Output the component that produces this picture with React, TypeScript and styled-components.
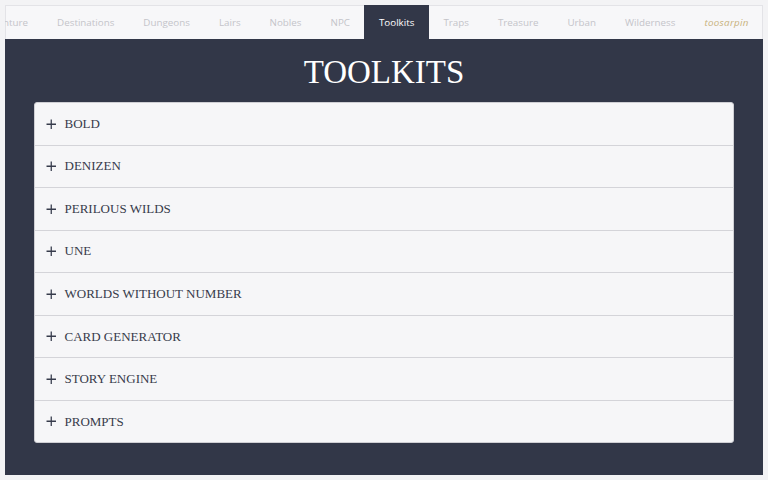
import React, { useLayoutEffect, useRef } from "react";
import styled, { createGlobalStyle, css } from "styled-components";

const Global = createGlobalStyle`
  html, body { margin: 0; padding: 0; background: #f3f3f5; }
  body { font-family: "Liberation Serif", serif; }
`;

const Page = styled.div`
  padding: 5px;
  display: flex;
  flex-direction: column;
`;

const Nav = styled.nav`
  height: 34px;
  background: #f7f7f9;
  box-shadow: inset 0 1px 0 #e3e3e7, inset 1px 0 0 #e3e3e7, inset -1px 0 0 #e3e3e7;
  overflow: hidden;
  display: flex;
`;

const Tab = styled.a<{ $active?: boolean; $brand?: boolean }>`
  flex-shrink: 0;
  display: flex;
  align-items: center;
  padding: 0 14.5px;
  font-family: "Open Sans", sans-serif;
  font-size: 9.8px;
  color: #c4c4c9;
  white-space: nowrap;
  text-decoration: none;
  ${(p) =>
    p.$active &&
    css`
      background: #323748;
      color: #ffffff;
    `}
  ${(p) =>
    p.$brand &&
    css`
      color: #c8b27c;
      font-style: italic;
      letter-spacing: 0.3px;
    `}
`;

const Panel = styled.main`
  background: #323748;
  padding: 13px 29px 32px;
  display: flex;
  flex-direction: column;
`;

const Title = styled.h1`
  margin: 0 0 10px;
  text-align: center;
  color: #ffffff;
  font-family: "Liberation Serif", serif;
  font-weight: normal;
  font-size: 33px;
  line-height: 40px;
`;

const Card = styled.div`
  background: #f6f6f8;
  border: 1px solid #cfcfd4;
  border-radius: 3px;
  display: flex;
  flex-direction: column;
`;

const Row = styled.div<{ $last?: boolean }>`
  height: 41.55px;
  display: flex;
  align-items: center;
  gap: 8px;
  padding-left: 11px;
  border-bottom: ${(p) => (p.$last ? "none" : "1px solid #d4d4d9")};
  color: #363b4b;
  font-family: "Liberation Serif", serif;
  font-size: 13px;
  cursor: pointer;
`;

const PlusIcon = styled.svg`
  width: 10.5px;
  height: 10.5px;
  flex-shrink: 0;
`;

const tabs = [
  "Adventure",
  "Destinations",
  "Dungeons",
  "Lairs",
  "Nobles",
  "NPC",
  "Toolkits",
  "Traps",
  "Treasure",
  "Urban",
  "Wilderness",
];

const items = [
  "BOLD",
  "DENIZEN",
  "PERILOUS WILDS",
  "UNE",
  "WORLDS WITHOUT NUMBER",
  "CARD GENERATOR",
  "STORY ENGINE",
  "PROMPTS",
];

export default function App() {
  const navRef = useRef<HTMLElement>(null);
  useLayoutEffect(() => {
    const el = navRef.current;
    if (el) el.scrollLeft = el.scrollWidth - el.clientWidth;
  }, []);
  return (
    <>
      <Global />
      <Page>
        <Nav ref={navRef}>
          {tabs.map((t) => (
            <Tab key={t} $active={t === "Toolkits"}>
              {t}
            </Tab>
          ))}
          <Tab $brand>toosarpin</Tab>
        </Nav>
        <Panel>
          <Title>TOOLKITS</Title>
          <Card>
            {items.map((it, i) => (
              <Row key={it} $last={i === items.length - 1}>
                <PlusIcon viewBox="0 0 10 10">
                  <path d="M5 0.5V9.5M0.5 5H9.5" stroke="#363b4b" strokeWidth="1.2" fill="none" />
                </PlusIcon>
                {it}
              </Row>
            ))}
          </Card>
        </Panel>
      </Page>
    </>
  );
}
